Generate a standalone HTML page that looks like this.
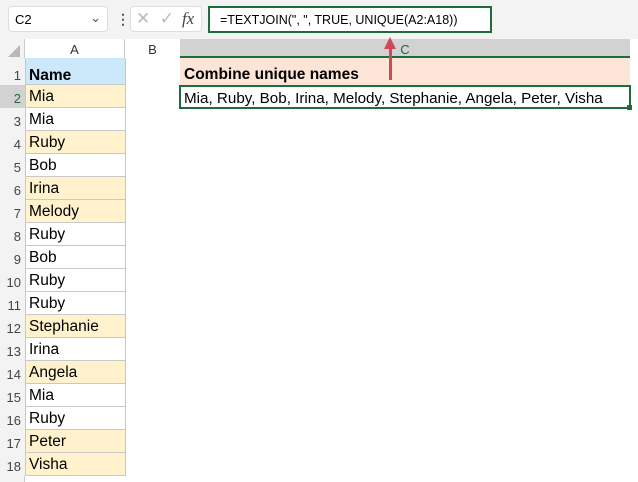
<!DOCTYPE html><html><head><style>
body{margin:0;width:638px;height:482px;background:#fff;font-family:"Liberation Sans",sans-serif;position:relative;overflow:hidden}
.a{position:absolute;box-sizing:border-box}
.rn{position:absolute;left:0;width:25px;text-align:right;padding-right:4px;box-sizing:border-box;font-size:13px;color:#444;background:#f3f3f3}
.ca{position:absolute;left:25px;width:101px;border:1px solid #c8c8c8;border-top:none;box-sizing:border-box;font-size:15.5px;padding-left:3px;color:#000}
</style></head><body>
<div class="a" style="left:0;top:0;width:638px;height:39px;background:#f3f3f3"></div>
<div class="a" style="left:8px;top:6px;width:100px;height:26px;background:#fff;border:1px solid #ddd;border-radius:4px;font-size:13px;padding:5px 0 0 6px">C2<span style="position:absolute;right:6px;top:3px;color:#555">&#8964;</span></div>
<div class="a" style="left:116px;top:11px;font-size:14px;color:#555;font-weight:bold">&#8942;</div>
<div class="a" style="left:130px;top:6px;width:72px;height:26px;background:#fff;border:1px solid #ddd;border-radius:4px;color:#bbb;font-size:17px;padding:2px 0 0 5px">&#10005;&nbsp;&nbsp;&#10003;<span style="color:#444;font-family:'Liberation Serif';font-style:italic;margin-left:8px">fx</span></div>
<div class="a" style="left:208px;top:6px;width:284px;height:27px;background:#fff;border:2px solid #1e6b3c;font-size:12.5px;padding:5px 0 0 10px">=TEXTJOIN(", ", TRUE, UNIQUE(A2:A18))</div>
<div class="a" style="left:0;top:39px;width:638px;height:20px;background:#fff"></div>
<div class="a" style="left:0;top:39px;width:25px;height:20px;background:#f3f3f3;border-right:1px solid #ccc"></div>
<div class="a" style="left:8px;top:45px;width:0;height:0;border-left:12px solid transparent;border-bottom:12px solid #b8b8b8"></div>
<div class="a" style="left:25px;top:39px;width:100px;height:20px;border-right:1px solid #ccc;text-align:center;font-size:13px;padding-top:3px;color:#333">A</div>
<div class="a" style="left:125px;top:39px;width:55px;height:20px;text-align:center;font-size:13px;padding-top:3px;color:#333">B</div>
<div class="a" style="left:180px;top:39px;width:450px;height:19px;background:#d2d2d2;border-bottom:2px solid #1e6b3c;text-align:center;font-size:13px;padding-top:3px;color:#1e6b3c">C</div>
<div class="a" style="left:0;top:58px;width:25px;height:424px;background:#f3f3f3;border-right:1px solid #ccc"></div>
<div class="a" style="left:0;top:85px;width:25px;height:23px;background:#d2d2d2;border-right:2px solid #1e6b3c"></div>
<div class="a" style="left:180px;top:58px;width:450px;height:27px;background:#fce4d6;font-weight:bold;font-size:15.5px;padding:8px 0 0 4px">Combine unique names</div>
<div class="a" style="left:179px;top:85px;width:452px;height:24px;border:2px solid #1e6b3c;font-size:15.2px;padding:3px 0 0 3px;white-space:nowrap">Mia, Ruby, Bob, Irina, Melody, Stephanie, Angela, Peter, Visha</div>
<div class="a" style="left:627px;top:105px;width:5px;height:5px;background:#1e6b3c"></div>
<div class="a" style="left:389px;top:46px;width:3px;height:34px;background:#d04a55"></div>
<div class="a" style="left:384px;top:37px;width:0;height:0;border-left:6px solid transparent;border-right:6px solid transparent;border-bottom:12px solid #d04a55"></div>
<div id="rows"></div>
<script>
var n=["Name","Mia","Mia","Ruby","Bob","Irina","Melody","Ruby","Bob","Ruby","Ruby","Stephanie","Irina","Angela","Mia","Ruby","Peter","Visha"];
var y=[1,2,4,6,7,12,14,17,18],h="";
for(var i=0;i<18;i++){var t=i==0?58:85+(i-1)*23,ht=i==0?27:23;
var bg=i==0?"#cce8fb":(y.indexOf(i+1)>=0?"#fff2cc":"#fff");
h+='<div class="rn" style="top:'+t+'px;height:'+ht+'px;line-height:'+(ht+(i==0?8:4))+'px;'+(i==1?'background:#d2d2d2;color:#1e6b3c':'')+'">'+(i+1)+'</div>';
h+='<div class="ca" style="top:'+t+'px;height:'+ht+'px;background:'+bg+';line-height:'+(i==0?35:24)+'px;'+(i==0?'font-weight:bold':'')+'">'+n[i]+'</div>';}
document.getElementById("rows").innerHTML=h;
</script>
</body></html>
